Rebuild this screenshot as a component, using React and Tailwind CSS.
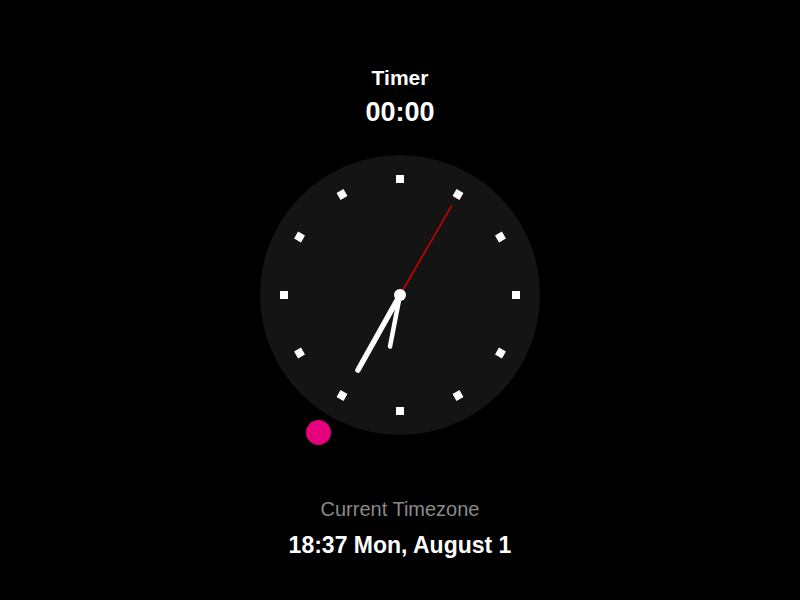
import React from 'react';

const ticks = Array.from({ length: 12 }, (_, i) => i * 30);

const ClockFace = () => (
  <div className="relative w-[280px] h-[280px]">
    <svg width="280" height="280" viewBox="-140 -140 280 280" className="block">
      <circle cx="0" cy="0" r="140" fill="#141414" />
      {ticks.map((deg) => (
        <rect
          key={deg}
          x="-4"
          y="-120"
          width="8"
          height="8"
          fill="#ffffff"
          transform={`rotate(${deg})`}
        />
      ))}
      {/* minute */}
      <line x1="0" y1="0" x2="-42" y2="75" stroke="#ffffff" strokeWidth="5.5" strokeLinecap="round" />
      {/* hour */}
      <line x1="0" y1="0" x2="-10" y2="51.5" stroke="#ffffff" strokeWidth="4.5" strokeLinecap="round" />
      {/* second */}
      <line x1="0" y1="0" x2="51.7" y2="-89.3" stroke="#d40000" strokeWidth="1.5" />
      <circle cx="0" cy="0" r="6" fill="#ffffff" />
    </svg>
    <div className="absolute left-[45.5px] top-[264.5px] w-[25px] h-[25px] rounded-full bg-[#e6007e]" />
  </div>
);

export default function App() {
  return (
    <div
      className="w-[800px] h-[600px] bg-black text-white flex flex-col items-center pt-[65px]"
      style={{ fontFamily: '"Liberation Sans", Arial, sans-serif' }}
    >
      <div className="text-[21px] leading-[25px] font-bold">Timer</div>
      <div className="text-[27px] leading-[31px] font-bold mt-[7px]">00:00</div>
      <div className="mt-[27px]">
        <ClockFace />
      </div>
      <div className="text-[20px] leading-[24px] text-[#8a8a8a] mt-[62px]">Current Timezone</div>
      <div className="text-[23px] leading-[28px] font-bold mt-[10px]">18:37 Mon, August 1</div>
    </div>
  );
}
